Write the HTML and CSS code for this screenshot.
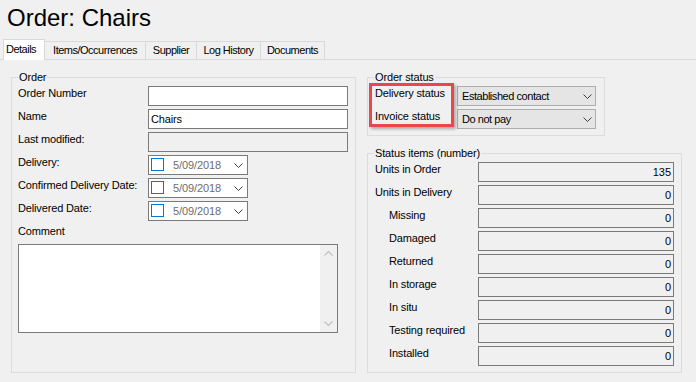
FILE: index.html
```html
<!DOCTYPE html>
<html lang="en">
<head>
<meta charset="utf-8">
<title>Order: Chairs</title>
<link rel="stylesheet" href="styles.css">
</head>
<body>
<h1 class="title">Order: Chairs</h1>
<div class="tabs">
  <div class="tab tab-details active">Details</div>
  <div class="tab tab-items">Items/Occurrences</div>
  <div class="tab tab-supplier">Supplier</div>
  <div class="tab tab-log">Log History</div>
  <div class="tab tab-docs">Documents</div>
</div>
<div class="page">
  <fieldset class="group group-order">
    <legend class="legend">Order</legend>
    <div class="form-grid order-grid">
      <span class="lbl">Order Number</span><div class="field"></div>
      <span class="lbl">Name</span><div class="field">Chairs</div>
      <span class="lbl">Last modified:</span><div class="field ro"></div>
      <span class="lbl">Delivery:</span>
      <div class="date"><span class="cb"></span><span class="date-text">5/09/2018</span><svg class="chev" width="9" height="5" viewBox="0 0 9 5"><polyline points="0.5,0.5 4.5,4.5 8.5,0.5" fill="none" stroke="#404040" stroke-width="1"/></svg></div>
      <span class="lbl">Confirmed Delivery Date:</span>
      <div class="date"><span class="cb"></span><span class="date-text">5/09/2018</span><svg class="chev" width="9" height="5" viewBox="0 0 9 5"><polyline points="0.5,0.5 4.5,4.5 8.5,0.5" fill="none" stroke="#404040" stroke-width="1"/></svg></div>
      <span class="lbl">Delivered Date:</span>
      <div class="date"><span class="cb"></span><span class="date-text">5/09/2018</span><svg class="chev" width="9" height="5" viewBox="0 0 9 5"><polyline points="0.5,0.5 4.5,4.5 8.5,0.5" fill="none" stroke="#404040" stroke-width="1"/></svg></div>
    </div>
    <div class="lbl comment-lbl">Comment</div>
    <div class="comment">
      <div class="comment-body"></div>
      <div class="vscroll">
        <svg width="9" height="5" viewBox="0 0 9 5"><polyline points="0.5,4.5 4.5,0.5 8.5,4.5" fill="none" stroke="#c2c2c2" stroke-width="1.2"/></svg>
        <svg width="9" height="5" viewBox="0 0 9 5"><polyline points="0.5,0.5 4.5,4.5 8.5,0.5" fill="none" stroke="#c2c2c2" stroke-width="1.2"/></svg>
      </div>
    </div>
  </fieldset>
  <div class="right-col">
    <fieldset class="group group-status">
      <legend class="legend legend-shift">Order status</legend>
      <div class="form-grid status-grid">
        <span class="highlight"></span>
        <span class="lbl">Delivery status</span>
        <div class="combo"><span>Established contact</span><svg class="chev" width="9" height="5" viewBox="0 0 9 5"><polyline points="0.5,0.5 4.5,4.5 8.5,0.5" fill="none" stroke="#404040" stroke-width="1"/></svg></div>
        <span class="lbl">Invoice status</span>
        <div class="combo"><span>Do not pay</span><svg class="chev" width="9" height="5" viewBox="0 0 9 5"><polyline points="0.5,0.5 4.5,4.5 8.5,0.5" fill="none" stroke="#404040" stroke-width="1"/></svg></div>
      </div>
    </fieldset>
    <fieldset class="group group-items">
      <legend class="legend legend-shift">Status items (number)</legend>
      <div class="form-grid items-grid">
        <span class="lbl">Units in Order</span><div class="num">135</div>
        <span class="lbl">Units in Delivery</span><div class="num">0</div>
        <span class="lbl indent">Missing</span><div class="num">0</div>
        <span class="lbl indent">Damaged</span><div class="num">0</div>
        <span class="lbl indent">Returned</span><div class="num">0</div>
        <span class="lbl indent">In storage</span><div class="num">0</div>
        <span class="lbl indent">In situ</span><div class="num">0</div>
        <span class="lbl indent">Testing required</span><div class="num">0</div>
        <span class="lbl indent">Installed</span><div class="num">0</div>
      </div>
    </fieldset>
  </div>
</div>
</body>
</html>
```
FILE: styles.css
```css
* { box-sizing: border-box; }
html, body { margin: 0; background: #f0f0f0; }
body {
  font-family: "Liberation Sans", Arial, sans-serif;
  font-size: 11px;
  color: #000;
  width: 696px;
  height: 382px;
  overflow: hidden;
}
.title {
  margin: 4px 0 0 7px;
  font-size: 24px;
  line-height: 28px;
  font-weight: normal;
}
.tabs {
  display: flex;
  align-items: flex-end;
  margin-top: 7px;
  height: 21px;
  padding-left: 3px;
  border-bottom: 1px solid #d9d9d9;
}
.tab {
  height: 18px;
  border: 1px solid #d9d9d9;
  border-bottom: none;
  margin-left: -1px;
  line-height: 17px;
  text-align: center;
  letter-spacing: -0.5px;
  white-space: nowrap;
  background: #f0f0f0;
}
.tab.active {
  height: 21px;
  margin-left: 0;
  margin-bottom: -1px;
  padding: 1px 0 0 2px;
  text-align: left;
  background: #fff;
}
.tab-details { width: 42px; }
.tab-items { width: 102px; }
.tab-supplier { width: 52px; }
.tab-log { width: 65px; }
.tab-docs { width: 65px; }

.page {
  display: flex;
  gap: 11px;
  padding: 11px 0 0 11px;
}
.group {
  margin: 0;
  min-width: 0;
  border: 1px solid #dcdcdc;
  padding: 2px 6px 6px 6px;
}
.legend {
  padding: 0 1px;
  font-size: 11px;
  line-height: 13px;
  letter-spacing: -0.15px;
}
.legend-shift { margin-left: -1px; }
.group-order { width: 345px; }

.form-grid {
  display: grid;
  grid-auto-rows: 20px;
  row-gap: 3px;
}
.order-grid { grid-template-columns: 130px 200px; }
.lbl {
  padding-top: 1px;
  line-height: 13px;
  letter-spacing: -0.15px;
  white-space: nowrap;
}
.field {
  border: 1px solid #7a7a7a;
  background: #fff;
  line-height: 18px;
  padding-left: 2px;
  letter-spacing: -0.15px;
}
.field.ro { background: #f0f0f0; }
.date {
  display: flex;
  align-items: flex-start;
  width: 100px;
  border: 1px solid #7a7a7a;
  background: #fff;
  padding: 0 4px 0 2px;
}
.cb {
  width: 13px;
  height: 13px;
  margin-top: 2px;
  border: 1px solid #0078d7;
  background: #fff;
}
.date-text {
  margin-left: 9px;
  line-height: 18px;
  color: #6d6d6d;
  letter-spacing: -0.1px;
}
.date .chev { margin-top: 7px; }
.chev { margin-left: auto; display: block; }

.comment-lbl { margin-top: 3px; }
.comment {
  display: flex;
  margin-top: 6px;
  width: 320px;
  height: 89px;
  border: 1px solid #7a7a7a;
  background: #fff;
}
.comment-body { flex: 1; }
.vscroll {
  width: 17px;
  background: #f0f0f0;
  display: flex;
  flex-direction: column;
  justify-content: space-between;
  align-items: center;
  padding: 6px 0 6px;
}
.vscroll svg { display: block; }

.right-col {
  display: flex;
  flex-direction: column;
  align-items: flex-start;
  gap: 11px;
}
.group-status {
  width: 238px;
  padding-left: 7px;
}
.status-grid {
  position: relative;
  grid-template-columns: 82px 139px;
}
.combo {
  display: flex;
  align-items: center;
  border: 1px solid #adadad;
  background: #e5e5e5;
  padding: 0 3px 0 4px;
  letter-spacing: -0.45px;
}
.highlight {
  position: absolute;
  left: -6px;
  top: -3px;
  width: 85px;
  height: 44px;
  border: 3px solid #e8474b;
  box-shadow: 2px 2px 3px rgba(0, 0, 0, 0.3);
}
.group-items {
  width: 315px;
  padding-left: 7px;
}
.items-grid { grid-template-columns: 103px 196px; }
.indent { padding-left: 14px; }
.num {
  border: 1px solid #7a7a7a;
  background: #f0f0f0;
  text-align: right;
  padding-right: 2px;
  line-height: 18px;
}
```
